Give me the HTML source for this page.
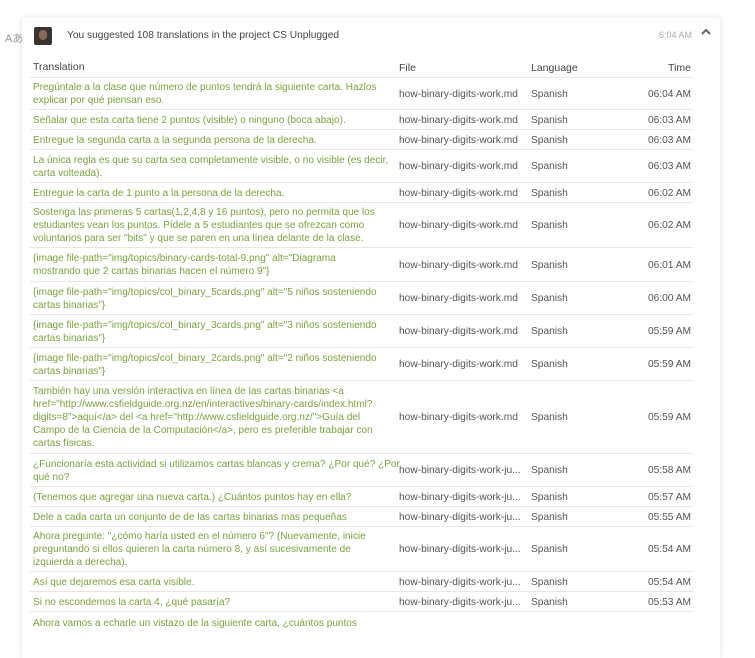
<!DOCTYPE html>
<html><head><meta charset="utf-8"><style>
body{margin:0;background:#fff;width:755px;height:624px;overflow:hidden;font-family:"Liberation Sans",sans-serif;position:relative}
.card{position:absolute;left:22px;top:18px;width:698px;height:640px;background:#fff;box-shadow:0 0 6px rgba(0,0,0,.12)}
.ic{position:absolute;left:5px;top:30px;font-size:11px;color:#999}
.av{position:absolute;left:34px;top:27px;width:18px;height:18px;background:#3a3430;border-radius:2px;overflow:hidden}
.av i{position:absolute;left:5px;top:3px;width:8px;height:10px;border-radius:4px;background:#8a6a55}
.title{position:absolute;left:67px;top:30px;font-size:10.2px;color:#444}
.tm{position:absolute;left:659px;top:30px;font-size:9px;color:#aaa}
.chev{position:absolute;left:700px;top:27px}
.row{position:absolute;left:30px;width:663px;border-bottom:1px solid #e8e8e0;font-size:10.2px;color:#555}
.row div{position:absolute;top:1px;bottom:0;display:flex;align-items:center;white-space:nowrap}
.t{left:3px;color:#7aa33c;line-height:13px;font-size:10.05px}
.f{left:369px}.l{left:501px}.h{right:2px}
.hd{font-weight:normal;color:#444;font-size:10.5px}
</style></head><body>
<div class="card"></div>
<div class="ic">A&#12354;</div>
<div class="av"><i></i></div>
<div class="title">You suggested 108 translations in the project CS Unplugged</div>
<div class="tm">6:04 AM</div>
<svg class="chev" width="12" height="10"><path d="M2 7 L6 3 L10 7" stroke="#666" stroke-width="2" fill="none"/></svg>

<div class="row hd" style="top:57px;height:20px"><div class="t" style="color:#444;font-size:10.5px">Translation</div><div class="f">File</div><div class="l">Language</div><div class="h">Time</div></div>
<div class="row" style="top:78px;height:31px"><div class="t">Pregúntale a la clase que número de puntos tendrá la siguiente carta. Hazlos<br>explicar por qué piensan eso.</div><div class="f">how-binary-digits-work.md</div><div class="l">Spanish</div><div class="h">06:04 AM</div></div>
<div class="row" style="top:110px;height:19px"><div class="t">Señalar que esta carta tiene 2 puntos (visible) o ninguno (boca abajo).</div><div class="f">how-binary-digits-work.md</div><div class="l">Spanish</div><div class="h">06:03 AM</div></div>
<div class="row" style="top:130px;height:19px"><div class="t">Entregue la segunda carta a la segunda persona de la derecha.</div><div class="f">how-binary-digits-work.md</div><div class="l">Spanish</div><div class="h">06:03 AM</div></div>
<div class="row" style="top:150px;height:32px"><div class="t">La única regla es que su carta sea completamente visible, o no visible (es decir,<br>carta volteada).</div><div class="f">how-binary-digits-work.md</div><div class="l">Spanish</div><div class="h">06:03 AM</div></div>
<div class="row" style="top:183px;height:19px"><div class="t">Entregue la carta de 1 punto a la persona de la derecha.</div><div class="f">how-binary-digits-work.md</div><div class="l">Spanish</div><div class="h">06:02 AM</div></div>
<div class="row" style="top:203px;height:44px"><div class="t">Sostenga las primeras 5 cartas(1,2,4,8 y 16 puntos), pero no permita que los<br>estudiantes vean los puntos. Pídele a 5 estudiantes que se ofrezcan como<br>voluntarios para ser "bits" y que se paren en una línea delante de la clase.</div><div class="f">how-binary-digits-work.md</div><div class="l">Spanish</div><div class="h">06:02 AM</div></div>
<div class="row" style="top:248px;height:33px"><div class="t">{image file-path="img/topics/binary-cards-total-9.png" alt="Diagrama<br>mostrando que 2 cartas binarias hacen el número 9"}</div><div class="f">how-binary-digits-work.md</div><div class="l">Spanish</div><div class="h">06:01 AM</div></div>
<div class="row" style="top:282px;height:32px"><div class="t">{image file-path="img/topics/col_binary_5cards.png" alt="5 niños sosteniendo<br>cartas binarias"}</div><div class="f">how-binary-digits-work.md</div><div class="l">Spanish</div><div class="h">06:00 AM</div></div>
<div class="row" style="top:315px;height:32px"><div class="t">{image file-path="img/topics/col_binary_3cards.png" alt="3 niños sosteniendo<br>cartas binarias"}</div><div class="f">how-binary-digits-work.md</div><div class="l">Spanish</div><div class="h">05:59 AM</div></div>
<div class="row" style="top:348px;height:32px"><div class="t">{image file-path="img/topics/col_binary_2cards.png" alt="2 niños sosteniendo<br>cartas binarias"}</div><div class="f">how-binary-digits-work.md</div><div class="l">Spanish</div><div class="h">05:59 AM</div></div>
<div class="row" style="top:381px;height:72px"><div class="t">También hay una versión interactiva en línea de las cartas binarias &lt;a<br>href="http://www.csfieldguide.org.nz/en/interactives/binary-cards/index.html?<br>digits=8"&gt;aquí&lt;/a&gt; del &lt;a href="http://www.csfieldguide.org.nz/"&gt;Guía del<br>Campo de la Ciencia de la Computación&lt;/a&gt;, pero es preferible trabajar con<br>cartas físicas.</div><div class="f">how-binary-digits-work.md</div><div class="l">Spanish</div><div class="h">05:59 AM</div></div>
<div class="row" style="top:454px;height:32px"><div class="t">¿Funcionaría esta actividad si utilizamos cartas blancas y crema? ¿Por qué? ¿Por<br>qué no?</div><div class="f">how-binary-digits-work-ju...</div><div class="l">Spanish</div><div class="h">05:58 AM</div></div>
<div class="row" style="top:487px;height:19px"><div class="t">(Tenemos que agregar una nueva carta.) ¿Cuántos puntos hay en ella?</div><div class="f">how-binary-digits-work-ju...</div><div class="l">Spanish</div><div class="h">05:57 AM</div></div>
<div class="row" style="top:507px;height:19px"><div class="t">Dele a cada carta un conjunto de de las cartas binarias mas pequeñas</div><div class="f">how-binary-digits-work-ju...</div><div class="l">Spanish</div><div class="h">05:55 AM</div></div>
<div class="row" style="top:527px;height:44px"><div class="t">Ahora pregunte: "¿cómo haría usted en el número 6"? (Nuevamente, inicie<br>preguntando si ellos quieren la carta número 8, y así sucesivamente de<br>izquierda a derecha).</div><div class="f">how-binary-digits-work-ju...</div><div class="l">Spanish</div><div class="h">05:54 AM</div></div>
<div class="row" style="top:572px;height:19px"><div class="t">Así que dejaremos esa carta visible.</div><div class="f">how-binary-digits-work-ju...</div><div class="l">Spanish</div><div class="h">05:54 AM</div></div>
<div class="row" style="top:592px;height:19px"><div class="t">Si no escondemos la carta 4, ¿qué pasaría?</div><div class="f">how-binary-digits-work-ju...</div><div class="l">Spanish</div><div class="h">05:53 AM</div></div>
<div class="row" style="top:612px;height:30px;border:none"><div class="t" style="align-items:flex-start;padding-top:4px">Ahora vamos a echarle un vistazo de la siguiente carta, ¿cuántos puntos</div></div>
</body></html>
